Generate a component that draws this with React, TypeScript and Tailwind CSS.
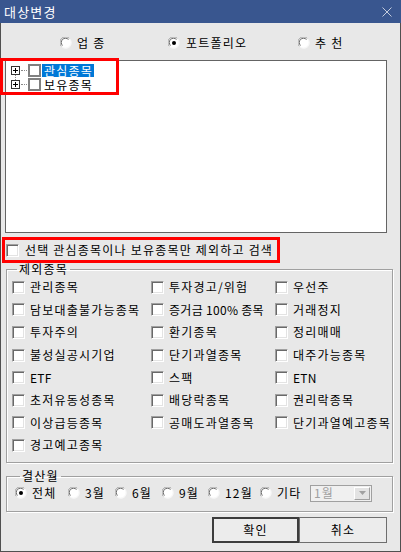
import React from 'react';

const font = { fontFamily: '"Noto Sans CJK KR", "Noto Sans", sans-serif' };

function Radio({ checked }: { checked?: boolean }) {
    return (
        <svg width="12" height="12" viewBox="0 0 12 12" className="shrink-0">
            <circle cx="6" cy="6" r="5.5" fill="#ffffff" />
            <path d="M1.5 9.5 A5 5 0 0 1 9.5 1.5" fill="none" stroke="#a0a0a0" strokeWidth="1" />
            <path d="M2.5 8.5 A4 4 0 0 1 8.5 2.5" fill="none" stroke="#696969" strokeWidth="1" />
            <path d="M9.5 1.5 A5 5 0 0 1 1.5 9.5" fill="none" stroke="#f4f4f4" strokeWidth="1" />
            {checked && <circle cx="6" cy="6" r="2" fill="#000000" />}
        </svg>
    );
}

function Check() {
    return (
        <span className="block w-[13px] h-[13px] shrink-0 bg-white border border-t-[#a0a0a0] border-l-[#a0a0a0] border-r-white border-b-white shadow-[inset_1px_1px_0_#696969,inset_-1px_-1px_0_#e3e3e3]" />
    );
}

function CheckItem({ label }: { label: string }) {
    const latin = /[A-Za-z0-9]/.test(label);
    return (
        <div className="flex items-center gap-[5px]">
            <Check />
            <span className={latin ? 'text-[12px] leading-[14px] whitespace-nowrap tracking-[0.3px]' : 'text-[12px] leading-[14px] whitespace-nowrap'}>
                {label}
            </span>
        </div>
    );
}

function Plus() {
    return (
        <svg width="9" height="9" viewBox="0 0 9 9" className="shrink-0">
            <rect x="0.5" y="0.5" width="8" height="8" fill="#ffffff" stroke="#333333" />
            <path d="M2 4.5 H7 M4.5 2 V7" stroke="#000000" />
        </svg>
    );
}

const rows = [
    ['관리종목', '투자경고/위험', '우선주'],
    ['담보대출불가능종목', '증거금 100% 종목', '거래정지'],
    ['투자주의', '환기종목', '정리매매'],
    ['불성실공시기업', '단기과열종목', '대주가능종목'],
    ['ETF', '스팩', 'ETN'],
    ['초저유동성종목', '배당락종목', '권리락종목'],
    ['이상급등종목', '공매도과열종목', '단기과열예고종목'],
    ['경고예고종목'],
];

const months = [
    { label: '전체', w: 'w-[53px]', checked: true },
    { label: '3월', w: 'w-[47px]' },
    { label: '6월', w: 'w-[47px]' },
    { label: '9월', w: 'w-[46px]' },
    { label: '12월', w: 'w-[52px]' },
    { label: '기타', w: 'w-[50px]' },
];

export default function App() {
    return (
        <div className="w-[401px] h-[552px] bg-[#e8e8e8] flex flex-col text-black tracking-[1.2px]" style={font}>
            {/* Title bar */}
            <div className="h-[23px] bg-[#39568f] flex items-center justify-between pl-[4px] pr-[9px] shrink-0">
                <span className="text-white text-[13px] leading-[15px]">대상변경</span>
                <svg width="10" height="10" viewBox="0 0 10 10">
                    <path d="M0.5 0.5 L9.5 9.5 M9.5 0.5 L0.5 9.5" stroke="#c3cbdc" strokeWidth="1" />
                </svg>
            </div>

            <div className="relative flex-1 flex flex-col border-x border-b border-[#505050]">
                {/* Radio row */}
                <div className="h-[37px] pt-[3px] pl-[59px] flex items-center text-[12px] leading-[14px]">
                    <div className="w-[108px] flex items-center gap-[5px]">
                        <Radio />
                        <span>업 종</span>
                    </div>
                    <div className="w-[130px] flex items-center gap-[6px]">
                        <Radio checked />
                        <span>포트폴리오</span>
                    </div>
                    <div className="flex items-center gap-[5px]">
                        <Radio />
                        <span>추 천</span>
                    </div>
                </div>

                {/* Tree */}
                <div className="ml-[4px] w-[382px] h-[173px] bg-white border border-[#646464] pt-[2px] pl-[5px] text-[12px] leading-[13px]">
                    <div className="flex items-center h-[14px]">
                        <div className="relative flex items-center">
                            <Plus />
                            <span className="absolute left-[4px] top-[9px] h-[5px] border-l border-dotted border-[#888]" />
                        </div>
                        <span className="w-[6px] border-t border-dotted border-[#888] mx-[1px]" />
                        <span className="block w-[13px] h-[13px] border-2 border-[#808080] bg-white shrink-0" />
                        <span className="bg-[#0078d7] text-white pl-[2px] pr-[1px] ml-[1px]">관심종목</span>
                    </div>
                    <div className="flex items-center h-[14px]">
                        <div className="relative flex items-center">
                            <Plus />
                            <span className="absolute left-[4px] top-[-5px] h-[5px] border-l border-dotted border-[#888]" />
                        </div>
                        <span className="w-[6px] border-t border-dotted border-[#888] mx-[1px]" />
                        <span className="block w-[13px] h-[13px] border-2 border-[#808080] bg-white shrink-0" />
                        <span className="pl-[2px] ml-[1px]">보유종목</span>
                    </div>
                </div>

                {/* Exclude option */}
                <div className="h-[30px] pt-[4px] pl-[5px] flex items-center gap-[6px]">
                    <Check />
                    <span className="text-[12px] leading-[14px]">선택 관심종목이나 보유종목만 제외하고 검색</span>
                </div>

                {/* 제외종목 */}
                <fieldset className="ml-[5px] w-[387px] h-[200px] border border-[#a0a0a0] shadow-[inset_1px_1px_0_#ffffff,1px_1px_0_#ffffff] pl-[5px] pt-[1px]">
                    <legend className="ml-[5px] px-[2px] text-[12px] leading-[12px]">제외종목</legend>
                    <div className="grid grid-cols-[139px_124px_1fr] auto-rows-[22.6px] items-center">
                        {rows.flatMap((r, i) => r.map((label, j) => <CheckItem key={`${i}-${j}`} label={label} />))}
                    </div>
                </fieldset>

                {/* 결산월 */}
                <fieldset className="mt-[7px] ml-[5px] w-[387px] h-[42px] border border-[#a0a0a0] shadow-[inset_1px_1px_0_#ffffff,1px_1px_0_#ffffff] pl-[8px]">
                    <legend className="ml-[5px] px-[2px] text-[12px] leading-[12px]">결산월</legend>
                    <div className="h-[22px] flex items-center text-[12px] leading-[14px]">
                        {months.map((m) => (
                            <div key={m.label} className={`${m.w} flex items-center gap-[5px]`}>
                                <Radio checked={m.checked} />
                                <span>{m.label}</span>
                            </div>
                        ))}
                        <div className="w-[62px] h-[17px] border border-[#a0a0a0] bg-[#f0f0f0] flex items-center justify-between pl-[3px] pr-[1px]">
                            <span className="text-[12px] leading-[14px] text-[#a0a0a0]">1월</span>
                            <span className="w-[16px] h-[13px] bg-[#e3e3e3] border border-t-white border-l-white border-r-[#a0a0a0] border-b-[#a0a0a0] flex items-center justify-center">
                                <svg width="7" height="4" viewBox="0 0 7 4">
                                    <path d="M0 0 H7 L3.5 4 Z" fill="#a0a0a0" />
                                </svg>
                            </span>
                        </div>
                    </div>
                </fieldset>

                {/* Buttons */}
                <div className="mt-[5px] ml-[211px] flex">
                    <button className="w-[87px] h-[26px] bg-[#ececec] border-2 border-[#3c3c3c] text-[12px] leading-[14px]">확인</button>
                    <button className="w-[88px] h-[26px] bg-[#ececec] border border-[#6e6e6e] text-[12px] leading-[14px]">취소</button>
                </div>

                {/* annotation boxes */}
                <div className="absolute left-[-1px] top-[35px] w-[119px] h-[37px] border-[3px] border-[#ff0000] pointer-events-none" />
                <div className="absolute left-[1px] top-[214px] w-[278px] h-[26px] border-[3px] border-[#ff0000] pointer-events-none" />
            </div>
        </div>
    );
}
